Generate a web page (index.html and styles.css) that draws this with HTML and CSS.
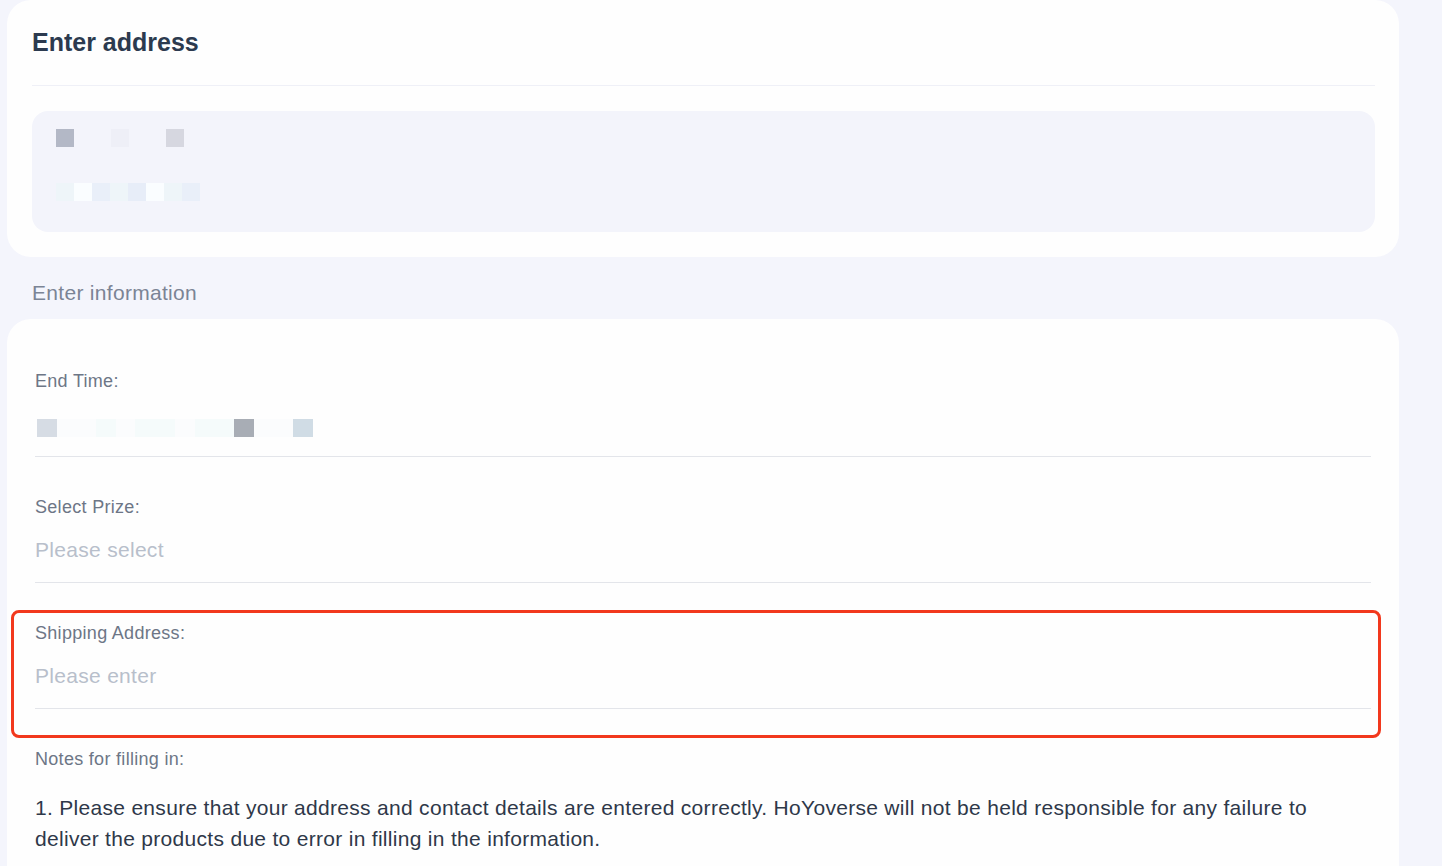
FILE: index.html
```html
<!DOCTYPE html>
<html lang="en">
<head>
<meta charset="utf-8">
<title>Enter address</title>
<link rel="stylesheet" href="styles.css">
</head>
<body>
<div class="page">
  <section class="card card-address">
    <h1 class="card-title">Enter address</h1>
    <div class="divider"></div>
    <div class="address-box">
      <div class="pix-row pix-row-1">
        <span class="pix pix-a"></span>
        <span class="pix pix-gap"></span>
        <span class="pix pix-faint"></span>
        <span class="pix pix-gap"></span>
        <span class="pix pix-b"></span>
      </div>
      <div class="pix-row pix-row-2">
        <span class="pix pix-w1"></span>
        <span class="pix pix-w2"></span>
        <span class="pix pix-w3"></span>
        <span class="pix pix-w1"></span>
        <span class="pix pix-w4"></span>
        <span class="pix pix-w2"></span>
        <span class="pix pix-w1"></span>
        <span class="pix pix-w3"></span>
      </div>
    </div>
  </section>

  <h2 class="section-title">Enter information</h2>

  <section class="card card-info">
    <div class="field">
      <div class="field-label">End Time:</div>
      <div class="field-value field-blocks">
        <span class="pix pix-c"></span>
        <span class="pix pix-w5"></span>
        <span class="pix pix-w5"></span>
        <span class="pix pix-w6"></span>
        <span class="pix pix-w5"></span>
        <span class="pix pix-w6"></span>
        <span class="pix pix-w6"></span>
        <span class="pix pix-w5"></span>
        <span class="pix pix-w6"></span>
        <span class="pix pix-w6"></span>
        <span class="pix pix-d"></span>
        <span class="pix pix-w5"></span>
        <span class="pix pix-w5"></span>
        <span class="pix pix-e"></span>
      </div>
    </div>
    <div class="field">
      <div class="field-label">Select Prize:</div>
      <div class="field-value placeholder">Please select</div>
    </div>
    <div class="field field-highlight">
      <div class="field-label">Shipping Address:</div>
      <div class="field-value placeholder">Please enter</div>
      <div class="highlight-frame"></div>
    </div>
    <div class="notes">
      <div class="notes-label">Notes for filling in:</div>
      <p class="notes-text">1. Please ensure that your address and contact details are entered correctly. HoYoverse will not be held responsible for any failure to deliver the products due to error in filling in the information.</p>
    </div>
  </section>
</div>
</body>
</html>
```

FILE: styles.css
```css
* {
  box-sizing: border-box;
}

html, body {
  margin: 0;
  padding: 0;
  background: #f4f5fc;
  height: 100%;
  overflow: hidden;
}

body {
  font-family: "Liberation Sans", Arial, Helvetica, sans-serif;
  color: #2e3849;
}

.page {
  width: 1392px;
  margin-left: 7px;
}

.card {
  background: #fefefe;
  border-radius: 24px;
}

.card-address {
  padding: 26px 24px 25px 25px;
}

.card-title {
  margin: 0;
  font-size: 25px;
  line-height: 32px;
  font-weight: 700;
  color: #2c3a4f;
}

.divider {
  height: 1px;
  background: #eff0f7;
  margin-top: 27px;
}

.address-box {
  margin-top: 25px;
  height: 121px;
  background: #f3f4fb;
  border-radius: 16px;
  padding: 18px 0 0 24px;
  display: flex;
  flex-direction: column;
  gap: 36px;
}

.pix-row {
  display: flex;
}

.pix {
  display: block;
  width: 18px;
  height: 18px;
}

.pix-gap {
  width: 37px;
}

.pix-a { background: #b3b8c6; }
.pix-b { background: #d6d7e0; }
.pix-faint { background: #eeeff7; }
.pix-w1 { background: #eef5f9; }
.pix-w2 { background: #fafdff; }
.pix-w3 { background: #e9eff9; }
.pix-w4 { background: #e7edf8; }

.section-title {
  margin: 22px 0 12px 25px;
  font-size: 21px;
  line-height: 28px;
  font-weight: 400;
  letter-spacing: 0.3px;
  color: #7b8495;
}

.card-info {
  padding: 12px 28px 40px 28px;
  min-height: 600px;
  border-bottom-left-radius: 0;
  border-bottom-right-radius: 0;
}

.field {
  position: relative;
  padding: 38px 0 18px 0;
  border-bottom: 1px solid #e3e5ea;
}

.field-label {
  font-size: 18px;
  line-height: 24px;
  letter-spacing: 0.3px;
  color: #6d7686;
}

.field-value {
  margin-top: 17px;
  height: 28px;
  font-size: 21px;
  line-height: 28px;
  letter-spacing: 0.3px;
}

.placeholder {
  color: #b8bfcb;
}

.field-blocks {
  display: flex;
  align-items: flex-end;
  padding-left: 2px;
  padding-bottom: 1px;
}

.field-blocks .pix {
  width: 19.7px;
  height: 18px;
}

.pix-c { background: #d6dce4; }
.pix-d { background: #a8adb5; }
.pix-e { background: #d0dce5; }
.pix-w5 { background: #fbfcfd; }
.pix-w6 { background: #f5fbfb; }

.highlight-frame {
  position: absolute;
  left: -24px;
  right: -10px;
  top: 27px;
  bottom: -30px;
  border: 3px solid #f2381d;
  border-radius: 8px;
  pointer-events: none;
}

.notes {
  padding-top: 38px;
}

.notes-label {
  font-size: 18px;
  line-height: 24px;
  letter-spacing: 0.3px;
  color: #6d7686;
}

.notes-text {
  margin: 21px 0 0 0;
  font-size: 21px;
  line-height: 31px;
  letter-spacing: 0.3px;
  color: #2e3849;
}
```
